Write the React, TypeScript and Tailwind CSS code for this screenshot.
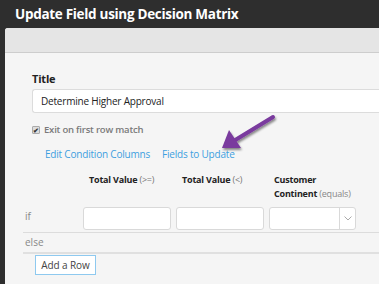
import React from 'react'

const FONT = { fontFamily: '"Open Sans", "Liberation Sans", sans-serif' }

function Arrow(){
  return <svg className="pointer-events-none absolute left-0 top-0" width="379" height="284" viewBox="0 0 379 284">
    <defs>
      <filter id="sh" x="-20%" y="-20%" width="140%" height="140%">
        <feDropShadow dx="1" dy="2" stdDeviation="1.2" floodColor="#000" floodOpacity="0.45" />
      </filter>
    </defs>
    <g filter="url(#sh)">
      <line x1="273" y1="117" x2="232" y2="142" stroke="#7a3a9e" strokeWidth="4" strokeLinecap="round" />
      <polygon points="222,148 229,130 241,148" fill="#7a3a9e" />
    </g>
  </svg>
}

function TextBox({ className }:{ className?: string }){
  return <div className={`h-[23px] rounded-[3px] border border-[#d9d9d9] bg-white ${className || ''}`}></div>
}

export default function App(){
  return <div className="relative h-[284px] w-[379px] overflow-hidden bg-[#2e2e2e]" style={FONT}>
    <div className="flex h-[28px] items-center pl-[15px] text-[13.5px] font-bold tracking-[-0.3px] text-white">Update Field using Decision Matrix</div>

    <div className="ml-[5px] h-[256px] rounded-tl-[3px] bg-[#f5f5f5]">
      <div className="h-[25px] rounded-tl-[3px] border-b border-[#cdcdcd] bg-[#e5e5e5]"></div>

      <div className="pl-[27px] pt-[17px]">
        <div className="text-[11px] font-bold leading-[18px] tracking-[-0.2px] text-[#222]">Title</div>
        <div className="mt-[1px] flex h-[24px] items-center rounded-l-[3px] border border-r-0 border-[#dcdcdc] bg-white pl-[8px] text-[10px] tracking-[-0.2px] text-[#222]">Determine Higher Approval</div>

        <div className="mt-[10px] flex items-center gap-[4px] text-[9.5px] font-semibold tracking-[-0.2px] text-[#7a7a7a]">
          <span className="flex h-[8px] w-[8px] items-center justify-center rounded-[1px] border border-[#aaa] bg-[#ddd] text-[7px] leading-none text-[#333]">✔</span>
          <span>Exit on first row match</span>
        </div>

        <div className="ml-[13px] mt-[10px] flex gap-[12px] text-[10px] tracking-[-0.2px] text-[#3d9fe0]">
          <span>Edit Condition Columns</span>
          <span>Fields to Update</span>
        </div>
      </div>

      <div className="flex pl-[84px] pt-[11px] text-[9px] font-bold leading-[14px] tracking-[-0.2px] text-[#222]">
        <div className="w-[93px]">Total Value <span className="font-normal text-[#777]">(&gt;=)</span></div>
        <div className="w-[92px]">Total Value <span className="font-normal text-[#777]">(&lt;)</span></div>
        <div className="leading-[14px]">Customer<br />Continent <span className="font-normal text-[#888]">(equals)</span></div>
      </div>

      <div className="ml-[18px] mt-[6px] flex items-start border-b border-[#dcdcdc] pb-[2px]">
        <div className="w-[60px] pl-[2px] pt-[2px] text-[10px] text-[#888]">if</div>
        <TextBox className="w-[88px]" />
        <TextBox className="ml-[5px] w-[88px]" />
        <div className="ml-[5px] flex h-[23px] w-[87px] rounded-[3px] border border-[#d9d9d9] bg-white">
          <div className="flex-1"></div>
          <div className="flex w-[16px] items-center justify-center border-l border-[#d9d9d9]">
            <svg width="8" height="5" viewBox="0 0 8 5"><path d="M0.5 0.5 L4 4 L7.5 0.5" fill="none" stroke="#aaa" strokeWidth="1" /></svg>
          </div>
        </div>
      </div>

      <div className="ml-[18px] flex h-[21px] items-center border-b-2 border-[#e0e0e0] pl-[2px] text-[10px] text-[#888]">else</div>

      <div className="ml-[30px] mt-[1px] flex h-[20px] w-[61px] items-center justify-center border border-[#8ec9ef] bg-white text-[10px] tracking-[-0.1px] text-[#444]">Add a Row</div>
    </div>

    <Arrow />
  </div>
}
